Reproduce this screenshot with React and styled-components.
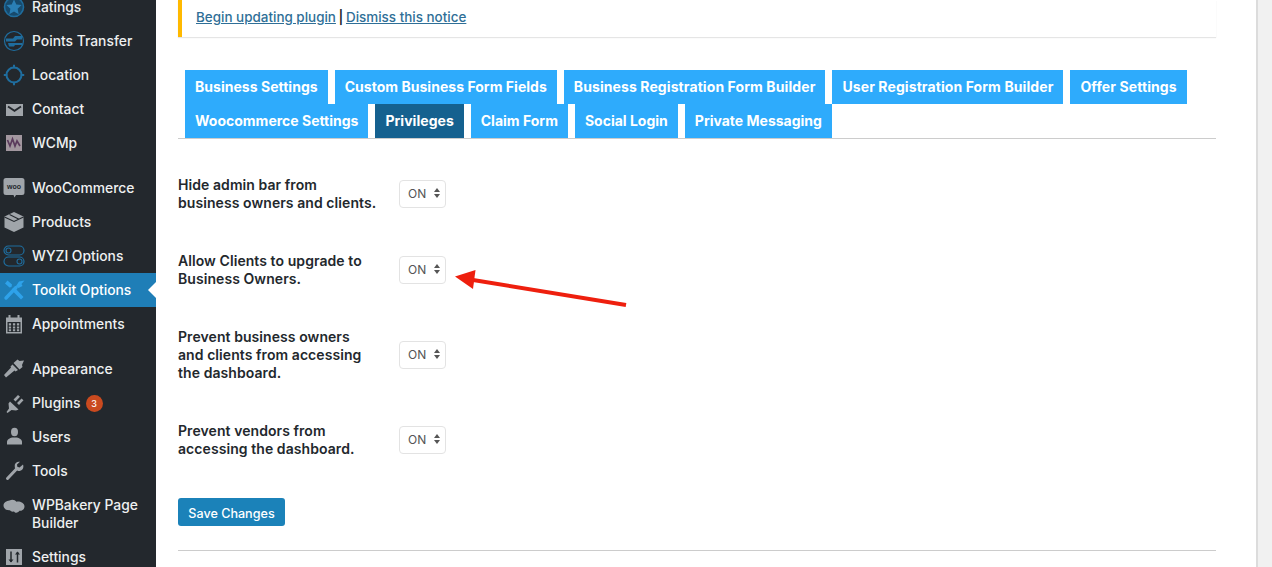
import React from 'react';
import styled, { createGlobalStyle } from 'styled-components';

const BLUE = '#1f6d9e';
const GREY = '#a0a5aa';
const DARK = '#23282d';

const Svg = ({ children, size = 22 }) => (
  <svg width={size} height={size} viewBox="0 0 22 22" fill="none">{children}</svg>
);

const RatingsIcon = () => (
  <Svg>
    <circle cx="11" cy="11" r="9.5" fill="#174a6c" stroke={BLUE} strokeWidth="1.6" />
    <path d="M11 3.500l2.300 5 5.300.6-4 3.700 1.100 5.400-4.700-2.800-4.700 2.800 1.100-5.400-4-3.700 5.300-.6z" fill="#2a7fb5" />
  </Svg>
);
const TransferIcon = () => (
  <Svg>
    <circle cx="11" cy="11" r="9.5" stroke={BLUE} strokeWidth="1.2" />
    <path d="M3 8.500h7l2-2.500h7v3.500h-5l-2 2H3zM5 13h14.500v2H12l-1 1.500H6z" fill={BLUE} />
  </Svg>
);
const LocationIcon = () => (
  <Svg>
    <circle cx="11" cy="11" r="7.500" stroke={BLUE} strokeWidth="2" />
    <path d="M11 .8v3.500M11 17.700v3.500M.8 11h3.500M17.700 11h3.500" stroke={BLUE} strokeWidth="2" />
  </Svg>
);
const MailIcon = () => (
  <Svg>
    <rect x="3" y="6" width="17" height="12" fill={GREY} />
    <path d="M5 8.500l6.500 4.300L18 8.500" stroke={DARK} strokeWidth="1.800" />
  </Svg>
);
const WcmpIcon = () => (
  <Svg>
    <rect x="3" y="3" width="16" height="16" fill="#a2979f" />
    <path d="M4.500 8l2.500 6 2.500-7 2.500 7 2-5 3 5" stroke="#5a3a5c" strokeWidth="1.700" />
  </Svg>
);
const WooIcon = () => (
  <Svg>
    <path d="M3 1h16a2.500 2.500 0 0 1 2.500 2.500v12a2.500 2.500 0 0 1-2.500 2.500h-6l-1.500 2.500-1-2.500H3a2.500 2.500 0 0 1-2.500-2.500v-12A2.500 2.500 0 0 1 3 1z" fill={GREY} />
    <text x="11" y="12" textAnchor="middle" fontFamily="'Liberation Sans', sans-serif" fontSize="7" fontWeight="700" fill={DARK}>woo</text>
  </Svg>
);
const BoxIcon = () => (
  <Svg>
    <path d="M11 1l9.500 4.500v11L11 21l-9.500-4.500v-11z" fill={GREY} />
    <path d="M1.500 6L11 10.500 20.500 6M6.500 3.500l9.500 4.700" stroke={DARK} strokeWidth="1.100" />
  </Svg>
);
const ToggleIcon = () => (
  <Svg>
    <rect x="1" y="1" width="20" height="9" rx="4.500" stroke={BLUE} strokeWidth="1.200" />
    <circle cx="5.500" cy="5.500" r="2.500" stroke={BLUE} strokeWidth="1.100" />
    <rect x="1" y="12" width="20" height="9" rx="4.500" stroke={BLUE} strokeWidth="1.200" />
    <circle cx="16.500" cy="16.500" r="2.500" stroke={BLUE} strokeWidth="1.100" />
  </Svg>
);
const ToolkitIcon = () => (
  <Svg>
    <path d="M3 19L13 8.500" stroke="#2ea2ea" strokeWidth="3.400" strokeLinecap="round" />
    <path d="M4.500 1.500l4.500 4-.5 2.500-2 .5-4.500-4zM9 10l2.500-1.500 9 9.500-2.500 2.500-9-9z" fill="#2ea2ea" />
    <path d="M13 7l3-4.500 5.500-1-3 3.500 1 2-4 2z" fill="#2ea2ea" />
  </Svg>
);
const CalendarIcon = () => (
  <Svg>
    <path d="M3 4.500h2.500V2h2v2.500h7V2h2v2.500H19v16H3zM4.500 9v10h13V9z" fill={GREY} />
    <path d="M5.800 10.200h2.300v2.200H5.800zM9.900 10.200h2.300v2.200H9.900zM13.900 10.200h2.300v2.200h-2.300zM5.800 13.400h2.300v2H5.800zM9.900 13.400h2.300v2H9.900zM13.900 13.400h2.300v2h-2.300zM5.800 16.300h2.300v1.900H5.800zM9.900 16.300h2.300v1.900H9.900zM13.900 16.300h2.300v1.900h-2.300z" fill={GREY} />
  </Svg>
);
const BrushIcon = () => (
  <Svg>
    <path d="M10.500 5l4-3.500 2 1.500 4.500-.5-2 4.500.5 2-3 2.500zM9.500 6.500l5.500 5.500-2.500 1.500-1 -1-8.500 7-2-2.500 7-7.500-.5-1z" fill={GREY} />
  </Svg>
);
const PlugIcon = () => (
  <Svg>
    <path d="M3.500 20l2.500-3.500-.5-5L7 9.500l8.500 8-2.500 1-4.500-.5L4.500 21zM10.500 7.500l4.500-4.500 2 1.800-4.500 4.700zM14 11l4.500-4.500 2 1.800-4.500 4.700z" fill={GREY} />
  </Svg>
);
const UserIcon = () => (
  <Svg>
    <ellipse cx="11.500" cy="6" rx="3.500" ry="4.200" fill={GREY} />
    <path d="M4 18.500v-2.500c0-2.500 3-4 5-4.500h5c2 .5 5 2 5 4.500v2.500z" fill={GREY} />
  </Svg>
);
const WrenchIcon = () => (
  <Svg>
    <path d="M4.500 18.500L13.500 9" stroke={GREY} strokeWidth="3" strokeLinecap="round" />
    <path d="M20 4.500l-3.500 3-2.200-.7-.3-2.200L17 1.800c-2.800-.6-5.500 1-5.300 4.200l.3 2.500 3 2.500c3.500.4 6.500-2.500 5-6.500z" fill={GREY} />
  </Svg>
);
const CloudIcon = () => (
  <Svg>
    <path d="M6.500 4.500c3-1.500 5.500-.5 7 1.300C16 5 21.500 6.500 21.500 10.500c0 3-2.500 4.500-5 4.300-1 1.700-4 3-5.500.7-2 .5-3.500-.5-4-1.300C3 14.500.5 12.500.5 9.500s3-4.500 6-5z" fill={GREY} />
  </Svg>
);
const SlidersIcon = () => (
  <Svg>
    <rect x="3" y="3" width="16" height="16" fill={GREY} />
    <path d="M8 5.500v10.500M14.500 6v10.500" stroke={DARK} strokeWidth="1.500" />
    <path d="M5.500 13.500h5L8 16.500zM12 8.500h5L14.500 5.500z" fill={DARK} />
  </Svg>
);

const GlobalStyle = createGlobalStyle`
  html, body {
    margin: 0;
    height: 567px;
    overflow: hidden;
    background: #fff;
  }
  body {
    font-family: "Inter", "Liberation Sans", sans-serif;
    font-size: 14px;
    color: #23282d;
  }
`;

const Page = styled.div`
  position: relative;
  display: flex;
  width: 1272px;
  height: 567px;
  overflow: hidden;
`;

const Sidebar = styled.nav`
  flex: 0 0 156px;
  background: #23282d;
  overflow: hidden;
`;

const Menu = styled.ul`
  list-style: none;
  margin: -10px 0 0;
  padding: 0;
`;

const Item = styled.li`
  position: relative;
  display: flex;
  align-items: ${p => (p.$tall ? 'flex-start' : 'center')};
  min-height: 34px;
  padding: ${p => (p.$tall ? '8px 8px 8px 0' : '0 8px 0 0')};
  box-sizing: border-box;
  margin-bottom: ${p => (p.$sep ? '11px' : '0')};
  background: ${p => (p.$active ? '#1f7eb7' : 'transparent')};
  color: ${p => (p.$active ? '#fff' : '#eef0f1')};
  font-size: 13.85px;
  font-weight: 500;
  line-height: 18px;
`;

const IconSlot = styled.span`
  flex: 0 0 32px;
  display: flex;
  justify-content: center;
  padding-right: 4px;
  box-sizing: border-box;
`;

const Badge = styled.span`
  display: inline-block;
  width: 17px;
  height: 17px;
  margin-left: 5px;
  border-radius: 50%;
  background: #ca4a1f;
  color: #fff;
  font-size: 9px;
  line-height: 17px;
  text-align: center;
  vertical-align: 1px;
`;

const Pointer = styled.span`
  position: absolute;
  right: 0;
  top: 9px;
  border: 8px solid transparent;
  border-right-color: #fff;
`;

const Main = styled.main`
  flex: 1;
  display: flex;
  min-width: 0;
`;

const Content = styled.div`
  flex: 0 0 1038px;
  margin: 0 40px 0 22px;
`;

const Gutter = styled.div`
  flex: 1;
  background: #f1f1f1;
  border-left: 2px solid #dcdcdc;
`;

const Notice = styled.div`
  height: 37px;
  box-sizing: border-box;
  padding-top: 8px;
  padding-left: 14px;
  border-left: 4px solid #ffb900;
  box-shadow: 0 1px 1px rgba(0, 0, 0, 0.1);
  font-size: 13.45px;
  font-weight: 500;
  line-height: 18px;
`;

const NoticeLink = styled.a`
  color: #2f6f97;
  text-decoration: underline;
`;

const NoticeSep = styled.span`
  margin: 0 -1px;
  font-weight: 600;
`;

const Tabs = styled.div`
  display: flex;
  flex-wrap: wrap;
  column-gap: 7px;
  margin-top: 33px;
  padding-left: 7px;
  border-bottom: 1px solid #ccc;
`;

const Tab = styled.a`
  height: 34px;
  padding: 0 10px;
  background: ${p => (p.$active ? '#15618f' : '#2eabfc')};
  color: #fff;
  font-size: 14px;
  font-weight: 700;
  line-height: 34px;
  letter-spacing: ${p => p.$spacing || 0}px;
  white-space: nowrap;
`;

const Form = styled.form`
  margin-top: 17px;
`;

const Row = styled.div`
  display: flex;
  align-items: center;
  padding: 20px 0;
`;

const Label = styled.label`
  flex: 0 0 221px;
  font-size: 14px;
  font-weight: 600;
  line-height: 18px;
  letter-spacing: 0.07px;
  white-space: pre-line;
`;

const Select = styled.div`
  display: flex;
  align-items: center;
  justify-content: space-between;
  width: 47px;
  height: 28px;
  box-sizing: border-box;
  padding: 0 5px 2px 8px;
  border: 1px solid #e3e3e3;
  border-radius: 4px;
  color: #555;
  font-size: 12px;
`;

const Carets = styled.svg`
  width: 6px;
  height: 10px;
  fill: #555;
`;

const SaveButton = styled.button`
  display: block;
  height: 28px;
  width: 107px;
  margin-top: 20px;
  padding: 2px 0 0;
  border: 0;
  border-radius: 3px;
  background: #1b82b9;
  color: #fff;
  font-family: inherit;
  font-size: 12.6px;
  font-weight: 500;
`;

const Rule = styled.hr`
  margin: 24px 0 0;
  border: 0;
  border-top: 1px solid #ccc;
`;

const Arrow = styled.svg`
  position: absolute;
  left: 450px;
  top: 265px;
  width: 180px;
  height: 45px;
`;

const menu = [
  { label: 'Ratings', Icon: RatingsIcon },
  { label: 'Points Transfer', Icon: TransferIcon },
  { label: 'Location', Icon: LocationIcon },
  { label: 'Contact', Icon: MailIcon },
  { label: 'WCMp', Icon: WcmpIcon, sep: true },
  { label: 'WooCommerce', Icon: WooIcon },
  { label: 'Products', Icon: BoxIcon },
  { label: 'WYZI Options', Icon: ToggleIcon },
  { label: 'Toolkit Options', Icon: ToolkitIcon, active: true },
  { label: 'Appointments', Icon: CalendarIcon, sep: true },
  { label: 'Appearance', Icon: BrushIcon },
  { label: 'Plugins', Icon: PlugIcon, badge: 3 },
  { label: 'Users', Icon: UserIcon },
  { label: 'Tools', Icon: WrenchIcon },
  { label: 'WPBakery Page Builder', Icon: CloudIcon, tall: true },
  { label: 'Settings', Icon: SlidersIcon },
];

const tabs = [
  { label: 'Business Settings', spacing: 0.03 },
  { label: 'Custom Business Form Fields', spacing: 0.03 },
  { label: 'Business Registration Form Builder', spacing: 0.09 },
  { label: 'User Registration Form Builder', spacing: 0.09 },
  { label: 'Offer Settings', spacing: 0.1 },
  { label: 'Woocommerce Settings' },
  { label: 'Privileges', active: true, spacing: 0.03 },
  { label: 'Claim Form' },
  { label: 'Social Login' },
  { label: 'Private Messaging' },
];

const options = [
  'Hide admin bar from\nbusiness owners and clients.',
  'Allow Clients to upgrade to\nBusiness Owners.',
  'Prevent business owners\nand clients from accessing\nthe dashboard.',
  'Prevent vendors from\naccessing the dashboard.',
];

export default function App() {
  return (
    <Page>
      <GlobalStyle />
      <Sidebar>
        <Menu>
          {menu.map(({ label, Icon, sep, active, badge, tall }) => (
            <Item key={label} $sep={sep} $active={active} $tall={tall}>
              <IconSlot><Icon /></IconSlot>
              <span>
                {label}
                {badge && <Badge>{badge}</Badge>}
              </span>
              {active && <Pointer />}
            </Item>
          ))}
        </Menu>
      </Sidebar>
      <Main>
        <Content>
          <Notice>
            <NoticeLink>Begin updating plugin</NoticeLink> <NoticeSep>|</NoticeSep> <NoticeLink>Dismiss this notice</NoticeLink>
          </Notice>
          <Tabs>
            {tabs.map(t => (
              <Tab key={t.label} $active={t.active} $spacing={t.spacing}>{t.label}</Tab>
            ))}
          </Tabs>
          <Form>
            {options.map(o => (
              <Row key={o}>
                <Label>{o}</Label>
                <Select>
                  ON
                  <Carets viewBox="0 0 6 10"><path d="M3 0l3 4H0zM3 10l3-4H0z" /></Carets>
                </Select>
              </Row>
            ))}
            <SaveButton type="button">Save Changes</SaveButton>
          </Form>
          <Rule />
        </Content>
        <Gutter />
      </Main>
      <Arrow viewBox="450 265 180 45">
        <path d="M470 279.500L626 305" stroke="#ee1f0e" strokeWidth="4" />
        <path d="M455 276.500L475.500 270L473 289z" fill="#ee1f0e" />
      </Arrow>
    </Page>
  );
}
